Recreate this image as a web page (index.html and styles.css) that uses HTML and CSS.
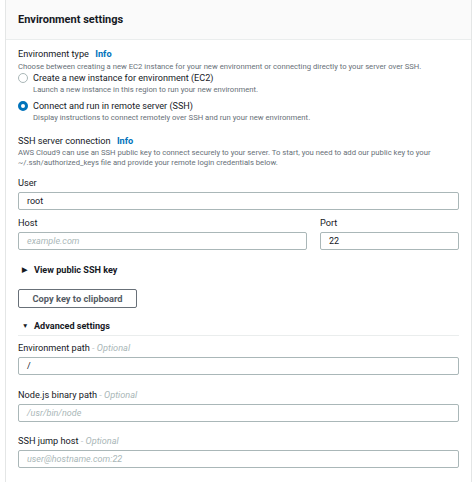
FILE: index.html
```html
<!DOCTYPE html>
<html>
<head>
<meta charset="utf-8">
<link rel="stylesheet" href="styles.css">
</head>
<body>
<div class="card">
  <div class="card-header">Environment settings</div>
  <div class="card-body">
    <div class="label sec-first">Environment type <span class="info">Info</span></div>
    <div class="desc">Choose between creating a new EC2 instance for your new environment or connecting directly to your server over SSH.</div>

    <div class="radio-row r1">
      <span class="radio"></span>
      <div class="radio-text">
        <div class="radio-label">Create a new instance for environment (EC2)</div>
        <div class="desc">Launch a new instance in this region to run your new environment.</div>
      </div>
    </div>
    <div class="radio-row r2">
      <span class="radio checked"></span>
      <div class="radio-text">
        <div class="radio-label">Connect and run in remote server (SSH)</div>
        <div class="desc">Display instructions to connect remotely over SSH and run your new environment.</div>
      </div>
    </div>

    <div class="label sec-ssh">SSH server connection <span class="info">Info</span></div>
    <div class="desc multi">AWS Cloud9 can use an SSH public key to connect securely to your server. To start, you need to add our public key to your<br>~/.ssh/authorized_keys file and provide your remote login credentials below.</div>

    <div class="field f-user">
      <div class="label">User</div>
      <div class="input">root</div>
    </div>

    <div class="row-hp">
      <div class="field f-host">
        <div class="label">Host</div>
        <div class="input placeholder">example.com</div>
      </div>
      <div class="field f-port">
        <div class="label">Port</div>
        <div class="input">22</div>
      </div>
    </div>

    <div class="expander ex-key"><span class="caret">&#9654;</span>View public SSH key</div>

    <button class="btn">Copy key to clipboard</button>

    <div class="expander ex-adv"><span class="caret">&#9660;</span>Advanced settings</div>
    <div class="divider"></div>

    <div class="field f-env">
      <div class="label">Environment path <span class="opt">- Optional</span></div>
      <div class="input">/</div>
    </div>
    <div class="field f-opt">
      <div class="label">Node.js binary path <span class="opt">- Optional</span></div>
      <div class="input placeholder">/usr/bin/node</div>
    </div>
    <div class="field f-opt f-last">
      <div class="label">SSH jump host <span class="opt">- Optional</span></div>
      <div class="input placeholder">user@hostname.com:22</div>
    </div>
  </div>
</div>
</body>
</html>
```

FILE: styles.css
```css
* { box-sizing: border-box; }
html, body { margin: 0; padding: 0; background: #ffffff; }
body {
  font-family: Roboto, "Open Sans", "Liberation Sans", sans-serif;
  color: #16191f;
  width: 474px;
  height: 482px;
  overflow: hidden;
}
.card {
  margin-left: 5px;
  width: 467px;
  height: 482px;
  border-left: 1px solid #e4e6e6;
  border-right: 1px solid #e4e6e6;
}
.card-header {
  height: 40px;
  background: #fafafa;
  border-bottom: 1px solid #eaeded;
  padding: 0 0 0 12px;
  font-size: 11px;
  font-weight: 700;
  line-height: 39px;
}
.card-body {
  padding: 0 12px 0 12px;
}
.label {
  font-size: 9.2px;
  line-height: 14px;
  height: 14px;
  white-space: nowrap;
  color: #16191f;
}
.info {
  color: #0073bb;
  font-weight: 700;
  margin-left: 4px;
}
.opt {
  color: #aab7b8;
  font-style: italic;
}
.desc {
  font-size: 7.7px;
  line-height: 11px;
  color: #687078;
  white-space: nowrap;
}
.desc.multi {
  line-height: 10px;
}
.sec-first { margin-top: 7px; }
.radio-row {
  display: flex;
  align-items: flex-start;
}
.r2 { margin-top: 5px; }
.radio {
  width: 10px;
  height: 10px;
  border-radius: 50%;
  border: 1.5px solid #aab7b8;
  margin-top: 1px;
  margin-right: 5px;
  flex: none;
  background: #fff;
}
.radio.checked {
  border: 3px solid #0073bb;
}
.radio-label {
  font-size: 9.1px;
  line-height: 12px;
  color: #16191f;
}
.sec-ssh { margin-top: 11px; }
.field .label { margin-bottom: 2px; }
.input {
  height: 18px;
  border: 1px solid #aab7b8;
  border-radius: 2px;
  font-size: 9px;
  line-height: 16px;
  padding-left: 8px;
  color: #16191f;
  background: #fff;
}
.input.placeholder {
  color: #aab7b8;
  font-style: italic;
}
.f-user { margin-top: 8px; }
.row-hp {
  display: flex;
  gap: 13px;
  margin-top: 6px;
}
.f-host { flex: 1; }
.f-port { width: 139px; }
.expander {
  font-size: 9.1px;
  font-weight: 700;
  line-height: 14px;
  margin-top: 13px;
  color: #16191f;
  white-space: nowrap;
}
.caret {
  display: inline-block;
  font-size: 6.5px;
  width: 12px;
  margin-left: 4px;
  vertical-align: 1px;
  color: #16191f;
}
.btn {
  display: block;
  margin-top: 12px;
  height: 19px;
  width: 119px;
  padding: 0;
  border: 1px solid #687078;
  border-radius: 2px;
  background: #fff;
  font-family: inherit;
  font-size: 9.3px;
  font-weight: 700;
  color: #545b64;
  line-height: 17px;
}
.ex-adv { margin-top: 11px; }
.divider {
  height: 1px;
  background: #eaeded;
  margin-top: 2px;
}
.f-env { margin-top: 5px; }
.f-opt { margin-top: 13px; }
.f-last { margin-top: 12px; }
```
